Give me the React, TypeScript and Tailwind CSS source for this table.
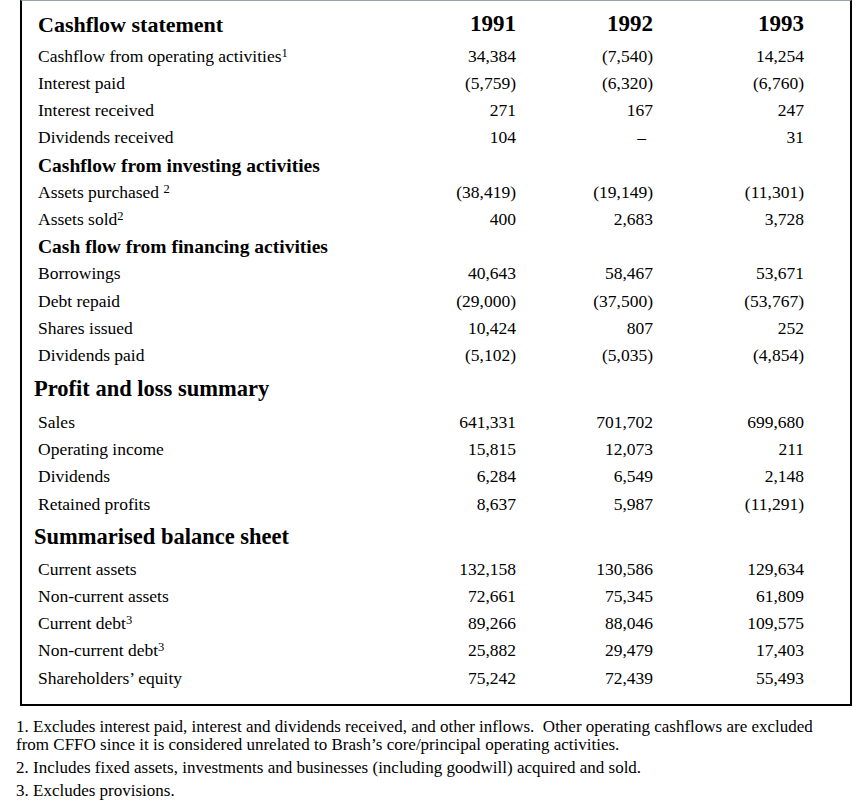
import React from "react";

type Row =
    | { kind: "row"; label: React.ReactNode; values: [string, string, string] }
    | { kind: "sub"; label: string }
    | { kind: "head"; label: string; h: string };

const Sup = ({ n }: { n: string }) => <sup className="text-[12.5px] top-[-0.4em]">{n}</sup>;

const rows: Row[] = [
    { kind: "row", label: <>Cashflow from operating activities<Sup n="1" /></>, values: ["34,384", "(7,540)", "14,254"] },
    { kind: "row", label: "Interest paid", values: ["(5,759)", "(6,320)", "(6,760)"] },
    { kind: "row", label: "Interest received", values: ["271", "167", "247"] },
    { kind: "row", label: "Dividends received", values: ["104", "–", "31"] },
    { kind: "sub", label: "Cashflow from investing activities" },
    { kind: "row", label: <>Assets purchased <Sup n="2" /></>, values: ["(38,419)", "(19,149)", "(11,301)"] },
    { kind: "row", label: <>Assets sold<Sup n="2" /></>, values: ["400", "2,683", "3,728"] },
    { kind: "sub", label: "Cash flow from financing activities" },
    { kind: "row", label: "Borrowings", values: ["40,643", "58,467", "53,671"] },
    { kind: "row", label: "Debt repaid", values: ["(29,000)", "(37,500)", "(53,767)"] },
    { kind: "row", label: "Shares issued", values: ["10,424", "807", "252"] },
    { kind: "row", label: "Dividends paid", values: ["(5,102)", "(5,035)", "(4,854)"] },
    { kind: "head", label: "Profit and loss summary", h: "h-[40px]" },
    { kind: "row", label: "Sales", values: ["641,331", "701,702", "699,680"] },
    { kind: "row", label: "Operating income", values: ["15,815", "12,073", "211"] },
    { kind: "row", label: "Dividends", values: ["6,284", "6,549", "2,148"] },
    { kind: "row", label: "Retained profits", values: ["8,637", "5,987", "(11,291)"] },
    { kind: "head", label: "Summarised balance sheet", h: "h-[38px]" },
    { kind: "row", label: "Current assets", values: ["132,158", "130,586", "129,634"] },
    { kind: "row", label: "Non-current assets", values: ["72,661", "75,345", "61,809"] },
    { kind: "row", label: <>Current debt<Sup n="3" /></>, values: ["89,266", "88,046", "109,575"] },
    { kind: "row", label: <>Non-current debt<Sup n="3" /></>, values: ["25,882", "29,479", "17,403"] },
    { kind: "row", label: "Shareholders’ equity", values: ["75,242", "72,439", "55,493"] },
];

const App = () => {
    return (
        <div className="w-[866px] h-[807px] bg-white text-black font-['Liberation_Serif',serif] overflow-hidden">
            {/* Table box */}
            <div className="ml-[20px] w-[832px] border-x-2 border-b-2 border-black border-t border-t-gray-400 pb-[12px]">
                {/* Header */}
                <div className="flex items-center h-[38px] mt-[4px] font-bold">
                    <div className="w-[394px] pl-[16px] text-[22px]">Cashflow statement</div>
                    <div className="w-[100px] text-right text-[23px]">1991</div>
                    <div className="w-[137px] text-right text-[23px]">1992</div>
                    <div className="w-[151px] text-right text-[23px]">1993</div>
                </div>

                {rows.map((row, idx) => {
                    if (row.kind === "sub") {
                        return (
                            <div key={idx} className="flex items-center h-[27.2px] pl-[16px] text-[19.5px] font-bold">
                                {row.label}
                            </div>
                        );
                    }
                    if (row.kind === "head") {
                        return (
                            <div key={idx} className={`flex items-center ${row.h} pl-[12px] text-[22.5px] font-bold`}>
                                {row.label}
                            </div>
                        );
                    }
                    return (
                        <div key={idx} className="flex items-center h-[27.2px] text-[17.5px] leading-none">
                            <div className="w-[394px] pl-[16px]">{row.label}</div>
                            <div className="w-[100px] text-right">{row.values[0]}</div>
                            <div className={`w-[137px] text-right ${row.values[1] === "–" ? "pr-[7px]" : ""}`}>{row.values[1]}</div>
                            <div className="w-[151px] text-right">{row.values[2]}</div>
                        </div>
                    );
                })}
            </div>

            {/* Footnotes */}
            <div className="pl-[16px] pt-[12px] text-[17px] leading-[18px] flex flex-col gap-[5px]">
                <p>
                    1. Excludes interest paid, interest and dividends received, and other inflows.&nbsp; Other operating cashflows are excluded
                    <br />
                    from CFFO since it is considered unrelated to Brash’s core/principal operating activities.
                </p>
                <p>2. Includes fixed assets, investments and businesses (including goodwill) acquired and sold.</p>
                <p>3. Excludes provisions.</p>
            </div>
        </div>
    );
};

export default App;
